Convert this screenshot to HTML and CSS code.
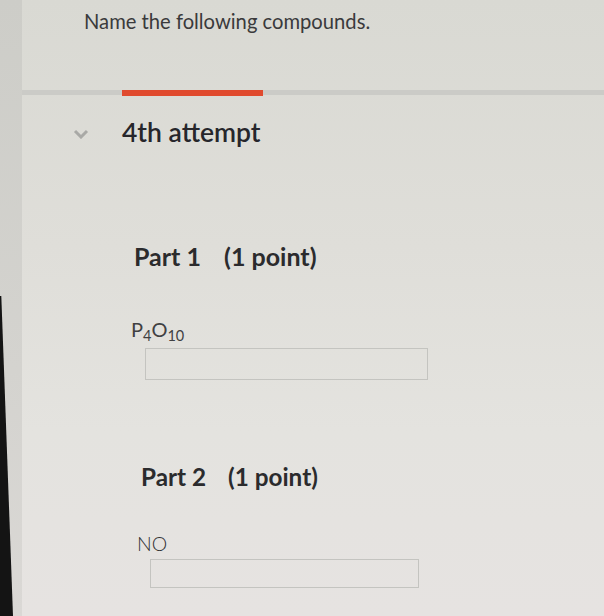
FILE: index.html
```html
<!DOCTYPE html>
<html>
<head>
<meta charset="utf-8">
<title>Assignment</title>
<link rel="stylesheet" href="styles.css">
</head>
<body>
<div class="page">
  <div class="rail"></div>
  <div class="main">
    <p class="intro">Name the following compounds.</p>

    <div class="tabbar"><div class="tab-active"></div></div>

    <div class="attempt">
      <svg class="chev" width="16" height="10" viewBox="0 0 16 10">
        <polyline points="2,2 8,8 14,2" fill="none" stroke="#a9a9a6" stroke-width="3"/>
      </svg>
      <span class="attempt-title">4th attempt</span>
    </div>

    <div class="part part-one">
      <h3 class="part-title">Part 1 <span class="pts">(1 point)</span></h3>
      <div class="formula">P<sub>4</sub>O<sub>10</sub></div>
      <input class="answer" type="text">
    </div>

    <div class="part part-two">
      <h3 class="part-title">Part 2 <span class="pts">(1 point)</span></h3>
      <div class="formula">NO</div>
      <input class="answer" type="text">
    </div>
  </div>
  <div class="bezel"></div>
</div>
</body>
</html>
```

FILE: styles.css
```css
html, body { margin: 0; padding: 0; }
body {
  font-family: Lato, "Open Sans", sans-serif;
  background: linear-gradient(180deg, #d9d9d3 0%, #dfded9 40%, #e4e3df 70%, #e6e3e1 100%);
  width: 604px;
  height: 616px;
  overflow: hidden;
}

.page { display: flex; height: 616px; position: relative; }
.rail { width: 22px; flex: none; background: linear-gradient(180deg, #cdcdc8, #d4d3cf 60%, #dad8d5); }
.main { flex: 1; }

.intro {
  margin: 0;
  padding: 9px 0 0 62px;
  font-size: 20.2px;
  line-height: 24px;
  color: #3a3a3c;
}

.tabbar {
  margin-top: 57px;
  height: 5px;
  background: #cbcbc7;
  position: relative;
}
.tab-active {
  position: absolute;
  left: 100px;
  top: 0;
  width: 141px;
  height: 6px;
  background: #e04a2e;
}

.attempt {
  display: flex;
  align-items: center;
  margin-top: 21px;
  height: 32px;
}
.chev { margin: 3px 0 0 51px; }
.attempt-title {
  margin-left: 33px;
  font-size: 26.5px;
  font-weight: 600;
  line-height: 32px;
  color: #26262b;
}

.part-title {
  margin: 0;
  font-size: 25px;
  font-weight: 700;
  color: #2b2b2d;
  line-height: 30px;
}
.pts { margin-left: 17px; }

.formula {
  font-size: 20px;
  color: #404042;
  line-height: 24px;
}
.formula sub { font-size: 14.5px; vertical-align: -4px; line-height: 0; }

.answer {
  display: block;
  box-sizing: border-box;
  height: 32px;
  border: 1px solid #c4c4c0;
  background: transparent;
  padding: 0;
}

.part-one { margin: 93px 0 0 112px; }
.part-one .formula { margin: 46px 0 0 -3px; }
.part-one .answer { margin: 7px 0 0 11px; width: 283px; }

.part-two { margin: 82px 0 0 119px; }
.part-two .part-title { font-size: 24.3px; }
.part-two .pts { margin-left: 16px; }
.part-two .formula { margin: 40px 0 0 -4px; font-size: 19.5px; font-weight: 300; color: #333335; }
.part-two .answer { margin: 3px 0 0 9px; width: 269px; height: 29px; }

/* dark monitor edge creeping in at lower left */
.bezel {
  position: absolute;
  left: 0;
  top: 296px;
  width: 13px;
  height: 320px;
  background: #141414;
  clip-path: polygon(0 0, 10% 0, 100% 100%, 0 100%);
}
```
